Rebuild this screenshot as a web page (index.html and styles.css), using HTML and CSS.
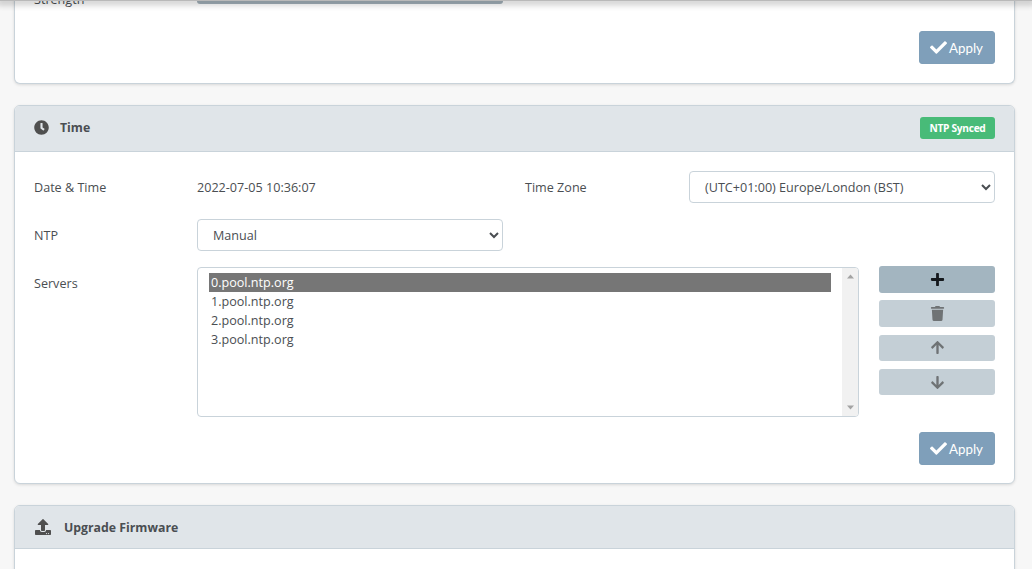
FILE: index.html
```html
<!DOCTYPE html>
<html lang="en">
<head>
<meta charset="utf-8">
<title>Settings</title>
<link rel="stylesheet" href="styles.css">
</head>
<body>
<div class="top-shadow"></div>
<main class="page">
  <section class="card card-clipped">
    <div class="card-body">
      <div class="row row-strength">
        <span class="label">Strength</span>
        <div class="meter"></div>
      </div>
      <div class="actions">
        <button class="btn-apply" type="button">
          <svg class="ico-check" viewBox="0 0 512 512"><path fill="currentColor" d="M173.9 439.4L7.5 273c-10-10-10-26.2 0-36.2l36.2-36.2c10-10 26.2-10 36.2 0L192 312.7 432.1 72.6c10-10 26.2-10 36.2 0l36.2 36.2c10 10 10 26.2 0 36.2L210.1 439.4c-10 10-26.2 10-36.2 0z"/></svg>
          Apply
        </button>
      </div>
    </div>
  </section>

  <section class="card">
    <header class="card-head">
      <svg class="ico-head" viewBox="0 0 512 512"><path fill="currentColor" d="M256 8C119 8 8 119 8 256s111 248 248 248 248-111 248-248S393 8 256 8zm57.1 350.1L224.9 294c-3.1-2.3-4.9-5.9-4.9-9.700V116c0-6.600 5.400-12 12-12h48c6.600 0 12 5.400 12 12v137.700l63.500 46.200c5.400 3.900 6.500 11.400 2.600 16.800l-28.200 38.800c-3.900 5.300-11.400 6.500-16.800 2.600z"/></svg>
      <h2 class="card-title">Time</h2>
      <span class="badge">NTP Synced</span>
    </header>
    <div class="card-body">
      <div class="row row-split">
        <div class="field">
          <span class="label label-mid">Date &amp; Time</span>
          <span class="value">2022-07-05 10:36:07</span>
        </div>
        <div class="field field-right">
          <span class="label label-tz label-mid">Time Zone</span>
          <select class="select select-tz"><option>(UTC+01:00) Europe/London (BST)</option></select>
        </div>
      </div>
      <div class="row row-ntp">
        <span class="label label-mid">NTP</span>
        <select class="select select-ntp"><option>Manual</option></select>
      </div>
      <div class="row row-servers">
        <span class="label">Servers</span>
        <div class="listbox">
          <ul class="list">
            <li class="list-item is-selected">0.pool.ntp.org</li>
            <li class="list-item">1.pool.ntp.org</li>
            <li class="list-item">2.pool.ntp.org</li>
            <li class="list-item">3.pool.ntp.org</li>
          </ul>
          <div class="scrollbar">
            <svg class="arrow" viewBox="0 0 10 6"><path fill="currentColor" d="M5 0l5 6H0z"/></svg>
            <svg class="arrow" viewBox="0 0 10 6"><path fill="currentColor" d="M5 6L0 0h10z"/></svg>
          </div>
        </div>
        <div class="tools">
          <button class="tool tool-active" type="button" aria-label="Add">
            <svg class="ico-tool" viewBox="0 0 448 512"><path fill="currentColor" d="M416 208H272V64c0-17.670-14.330-32-32-32h-32c-17.670 0-32 14.330-32 32v144H32c-17.670 0-32 14.330-32 32v32c0 17.670 14.330 32 32 32h144v144c0 17.670 14.330 32 32 32h32c17.670 0 32-14.330 32-32V304h144c17.670 0 32-14.330 32-32v-32c0-17.670-14.330-32-32-32z"/></svg>
          </button>
          <button class="tool" type="button" aria-label="Delete">
            <svg class="ico-tool" viewBox="0 0 448 512"><path fill="currentColor" d="M432 32H312l-9.400-18.700A24 24 0 0 0 281.100 0H166.800a23.700 23.700 0 0 0-21.400 13.300L136 32H16A16 16 0 0 0 0 48v32a16 16 0 0 0 16 16h416a16 16 0 0 0 16-16V48a16 16 0 0 0-16-16zM53.200 467a48 48 0 0 0 47.900 45h245.800a48 48 0 0 0 47.900-45L416 128H32z"/></svg>
          </button>
          <button class="tool" type="button" aria-label="Move up">
            <svg class="ico-tool" viewBox="0 0 448 512"><path fill="currentColor" d="M34.900 289.500l-22.200-22.200c-9.400-9.400-9.400-24.600 0-33.900L207 39c9.400-9.400 24.600-9.400 33.900 0l194.300 194.300c9.400 9.400 9.400 24.600 0 33.900L413 289.400c-9.500 9.500-25 9.300-34.300-.4L264 168.600V456c0 13.300-10.700 24-24 24h-32c-13.300 0-24-10.700-24-24V168.600L69.200 289.100c-9.300 9.800-24.800 10-34.300.4z"/></svg>
          </button>
          <button class="tool" type="button" aria-label="Move down">
            <svg class="ico-tool" viewBox="0 0 448 512"><path fill="currentColor" d="M413.100 222.500l22.200 22.200c9.400 9.400 9.400 24.600 0 33.900L241 473c-9.400 9.400-24.600 9.400-33.900 0L12.700 278.600c-9.400-9.400-9.400-24.600 0-33.900l22.200-22.200c9.500-9.500 25-9.300 34.300.4L184 343.400V56c0-13.300 10.700-24 24-24h32c13.300 0 24 10.700 24 24v287.400l114.800-120.500c9.300-9.800 24.800-10 34.300-.4z"/></svg>
          </button>
        </div>
      </div>
      <div class="actions">
        <button class="btn-apply" type="button">
          <svg class="ico-check" viewBox="0 0 512 512"><path fill="currentColor" d="M173.900 439.400L7.500 273c-10-10-10-26.200 0-36.200l36.200-36.200c10-10 26.200-10 36.200 0L192 312.700 432.100 72.600c10-10 26.200-10 36.200 0l36.200 36.200c10 10 10 26.200 0 36.200L210.100 439.400c-10 10-26.200 10-36.200 0z"/></svg>
          Apply
        </button>
      </div>
    </div>
  </section>

  <section class="card card-tail">
    <header class="card-head card-head-upload">
      <svg class="ico-upload" viewBox="0 0 512 512"><path fill="currentColor" d="M296 384h-80c-13.300 0-24-10.700-24-24V192h-87.700c-17.800 0-26.700-21.500-14.100-34.100L242.300 5.700c7.500-7.500 19.800-7.500 27.300 0l152.200 152.200c12.600 12.600 3.700 34.100-14.100 34.100H320v168c0 13.300-10.700 24-24 24zm216-8v112c0 13.300-10.700 24-24 24H24c-13.300 0-24-10.700-24-24V376c0-13.300 10.700-24 24-24h136v8c0 30.900 25.100 56 56 56h80c30.900 0 56-25.100 56-56v-8h136c13.300 0 24 10.700 24 24zm-124 88c0-11-9-20-20-20s-20 9-20 20 9 20 20 20 20-9 20-20zm64 0c0-11-9-20-20-20s-20 9-20 20 9 20 20 20 20-9 20-20z"/></svg>
      <h2 class="card-title">Upgrade Firmware</h2>
    </header>
    <div class="card-body"></div>
  </section>
</main>
</body>
</html>
```

FILE: styles.css
```css
* { box-sizing: border-box; }

html, body {
  margin: 0;
  height: 100%;
  overflow: hidden;
}

body {
  background: #f7f7f7;
  color: #4a4e52;
  font-family: "Open Sans", "Liberation Sans", sans-serif;
  font-size: 12.6px;
}

.top-shadow {
  position: fixed;
  top: 0;
  left: 0;
  right: 0;
  height: 1px;
  background: #b9b9b9;
  box-shadow: 0 1px 6px 3px rgba(0, 0, 0, 0.2);
  z-index: 5;
}

.page {
  display: flex;
  flex-direction: column;
  gap: 21px;
  padding: 0 17px 0 14px;
  margin-top: -20px;
}

.card {
  background: #fff;
  border: 1px solid #c9d3da;
  border-radius: 6px;
  box-shadow: 0 1px 3px rgba(0, 0, 0, 0.12);
}

.card-clipped {
  height: 104px;
  border-top: 0;
  border-radius: 0 0 6px 6px;
}

.card-head {
  display: flex;
  align-items: center;
  height: 46px;
  padding: 0 19px 2px 19px;
  background: #e0e5e9;
  border-bottom: 1px solid #c9d3da;
  border-radius: 5px 5px 0 0;
}

.card-head-upload {
  height: 43px;
  padding: 0 19px 0 20px;
}

.card-title {
  margin: 0;
  font-size: 12.3px;
  font-weight: 700;
  color: #4a4e52;
}

.ico-head {
  width: 15px;
  height: 15px;
  margin-right: 11px;
  color: #4f4f4f;
}

.ico-upload {
  width: 16px;
  height: 16px;
  margin-right: 13px;
  color: #4f4f4f;
}

.badge {
  margin-left: auto;
  width: 75px;
  height: 22px;
  line-height: 22px;
  background: #48bb78;
  color: #fff;
  font-size: 10.2px;
  font-weight: 700;
  letter-spacing: -0.3px;
  text-align: center;
  white-space: nowrap;
  border-radius: 3px;
}

.card-body {
  padding: 0 19px;
}

.card-clipped .card-body {
  padding-top: 11px;
}

.row {
  display: flex;
  align-items: flex-start;
}

.label {
  display: block;
  width: 163px;
  flex: none;
  line-height: 18px;
}

.label-mid {
  padding-top: 2px;
  height: 20px;
}

.row-strength {
  height: 40px;
}

.meter {
  width: 306px;
  height: 13px;
  background: #a3b1ba;
  border-radius: 3px;
}

.row-split {
  padding-top: 19px;
  justify-content: space-between;
}

.field {
  display: flex;
  align-items: center;
  height: 32px;
}

.field-right .label-tz {
  width: 164px;
}

.value { line-height: 18px; padding-top: 2px; }

.select {
  height: 32px;
  font: inherit;
  color: #4a4e52;
  background-color: #fff;
  border: 1px solid #c9d3da;
  border-radius: 4px;
  padding: 0 11px;
}

.select-tz { width: 306px; }
.select-ntp { width: 306px; }

.row-ntp {
  margin-top: 16px;
  align-items: center;
}

.row-servers {
  margin-top: 16px;
}

.row-servers .label {
  padding-top: 8px;
  height: 26px;
}

.listbox {
  display: flex;
  width: 662px;
  height: 150px;
  margin-right: 20px;
  background: #fff;
  border: 1px solid #c9d3da;
  border-radius: 4px;
  overflow: hidden;
}

.list {
  flex: 1;
  margin: 0;
  padding: 5px 11px 0 11px;
  list-style: none;
}

.list-item {
  height: 19px;
  line-height: 19px;
  padding-left: 2px;
}

.is-selected {
  background: #767676;
  color: #fff;
}

.scrollbar {
  display: flex;
  flex-direction: column;
  justify-content: space-between;
  align-items: center;
  width: 16px;
  padding: 6px 0;
  background: #f1f1f1;
  color: #a3a3a3;
}

.arrow {
  width: 7px;
  height: 5px;
}

.tools {
  display: flex;
  flex-direction: column;
  gap: 7.7px;
  width: 116px;
  margin-top: -1px;
}

.tool {
  display: flex;
  align-items: center;
  justify-content: center;
  height: 26.6px;
  padding: 0;
  border: 0;
  border-radius: 3px;
  background: #c4cfd6;
  color: #6f7375;
}

.tool-active {
  background: #a3b5c0;
  color: #14181c;
}

.ico-tool {
  width: 15px;
  height: 15px;
}

.actions {
  display: flex;
  justify-content: flex-end;
  padding: 15px 0 18px;
}

.card-clipped .actions { padding: 0; }

.btn-apply {
  display: flex;
  align-items: center;
  gap: 2px;
  width: 76px;
  height: 33px;
  padding: 0 0 0 10px;
  border: 1px solid #7e9eb8;
  border-radius: 3px;
  background: #7f9fba;
  color: #fff;
  font-family: Lato, "Open Sans", sans-serif;
  font-size: 13.3px;
}

.ico-check {
  width: 17px;
  height: 17px;
}

.card-tail {
  height: 200px;
  flex: none;
}
```
